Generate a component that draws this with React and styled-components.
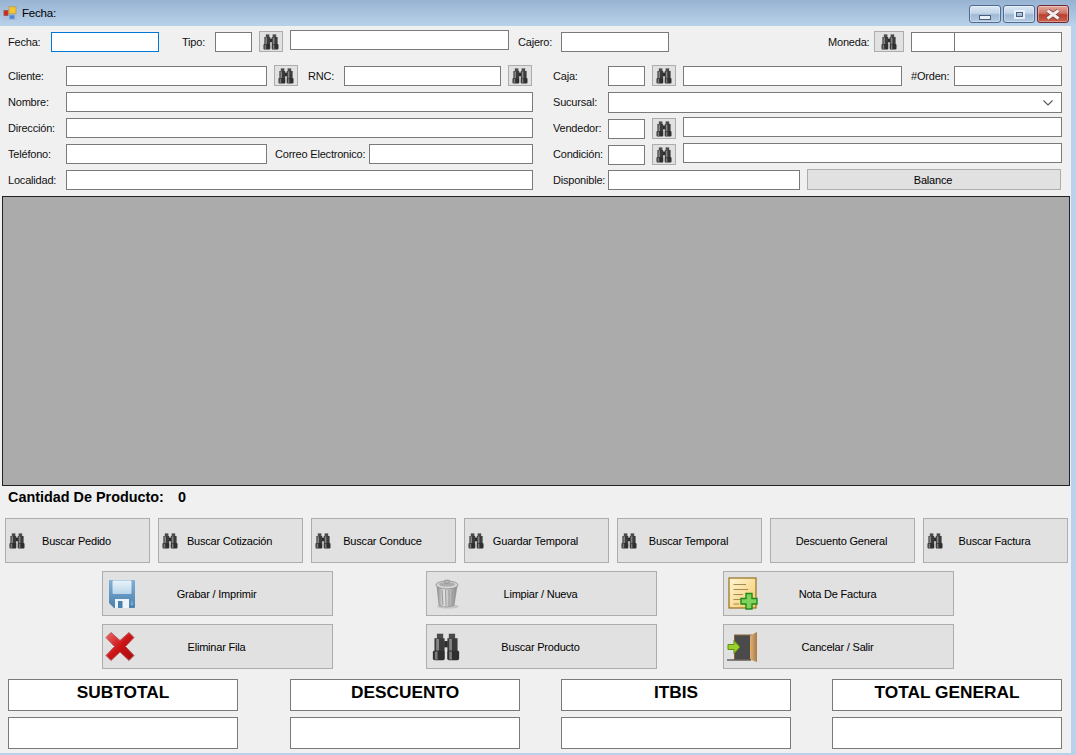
import React from 'react';
import styled, { createGlobalStyle } from 'styled-components';

const GlobalStyle = createGlobalStyle`
  html, body { margin: 0; padding: 0; background: #f0f0f0; }
  * { box-sizing: border-box; }
`;

const BinocularsIcon = ({ size = 16 }) => (
  <svg width={size} height={size} viewBox="0 0 16 16">
    <rect x="2.8" y="0.4" width="3.6" height="3" fill="#4a4a4a" />
    <rect x="9.6" y="0.4" width="3.6" height="3" fill="#4a4a4a" />
    <rect x="1.4" y="3" width="5.8" height="7.6" fill="#3b3b3b" />
    <rect x="8.8" y="3" width="5.8" height="7.6" fill="#3b3b3b" />
    <rect x="2.4" y="3.4" width="1.6" height="7" fill="#858585" />
    <rect x="9.8" y="3.4" width="1.6" height="7" fill="#858585" />
    <rect x="7" y="4.6" width="2" height="3.6" fill="#2c2c2c" />
    <rect x="0.5" y="10" width="6.8" height="5.6" rx="1" fill="#2f2f2f" />
    <rect x="8.7" y="10" width="6.8" height="5.6" rx="1" fill="#2f2f2f" />
    <rect x="1.6" y="10.6" width="1.6" height="4.6" fill="#7a7a7a" />
    <rect x="9.8" y="10.6" width="1.6" height="4.6" fill="#7a7a7a" />
  </svg>
);

const AppIcon = () => (
  <svg width="14" height="14" viewBox="0 0 14 14">
    <rect x="0" y="0" width="14" height="14" fill="#a9bdd4" opacity="0.45" />
    <rect x="1" y="4.5" width="4" height="5" fill="#d9251c" stroke="#8f5a50" strokeWidth="0.8" />
    <rect x="6" y="0.8" width="7" height="7" fill="#f6c531" stroke="#b79a52" strokeWidth="0.8" />
    <rect x="6.5" y="9" width="5" height="4" fill="#4a86d8" stroke="#8fa8c8" strokeWidth="0.8" />
  </svg>
);

const SaveIcon = () => (
  <svg width="28" height="30" viewBox="0 0 28 30">
    <defs>
      <linearGradient id="saveBody" x1="0" y1="0" x2="0" y2="1">
        <stop offset="0" stopColor="#7fb0d6" />
        <stop offset="1" stopColor="#4b81ae" />
      </linearGradient>
      <linearGradient id="saveLabel" x1="0" y1="0" x2="0" y2="1">
        <stop offset="0" stopColor="#eaf3fa" />
        <stop offset="1" stopColor="#b9d5ea" />
      </linearGradient>
    </defs>
    <path d="M1 2 Q1 1 2 1 H26 Q27 1 27 2 V28 Q27 29 26 29 H6 L1 24 Z" fill="url(#saveBody)" />
    <rect x="4.5" y="1.5" width="19" height="13.5" rx="1" fill="url(#saveLabel)" />
    <rect x="7" y="20" width="14" height="9" fill="#eef4f9" />
    <rect x="10" y="22" width="4.5" height="7" fill="#4b81ae" />
    <path d="M24 22 V25.5 M22.8 24.6 L24 26 L25.2 24.6" stroke="#9cc0dc" strokeWidth="0.8" fill="none" />
  </svg>
);

const DeleteIcon = () => (
  <svg width="30" height="31" viewBox="0 0 30 31">
    <defs>
      <linearGradient id="deleteFill" x1="0" y1="0" x2="1" y2="1">
        <stop offset="0" stopColor="#ec6a6a" />
        <stop offset="0.5" stopColor="#cc1416" />
        <stop offset="1" stopColor="#a30d0f" />
      </linearGradient>
    </defs>
    <path
      d="M6 1.5 L15 9.5 L24 1.5 L29 6.5 L20.5 15.5 L29 24.5 L24 29.5 L15 21 L6 29.5 L1 24.5 L9.5 15.5 L1 6.5 Z"
      fill="url(#deleteFill)"
      stroke="#b85a5a"
      strokeWidth="1"
      strokeLinejoin="round"
    />
  </svg>
);

const TrashIcon = () => (
  <svg width="26" height="30" viewBox="0 0 26 30">
    <defs>
      <linearGradient id="trashFill" x1="0" y1="0" x2="1" y2="0">
        <stop offset="0" stopColor="#8e8e8e" />
        <stop offset="0.35" stopColor="#e2e2e2" />
        <stop offset="1" stopColor="#8a8a8a" />
      </linearGradient>
    </defs>
    <ellipse cx="14" cy="27.5" rx="11" ry="2" fill="#c4c4c4" />
    <path d="M3 7 L5 26.5 Q12 29.5 20 26.5 L23 7 Z" fill="url(#trashFill)" stroke="#8a8a8a" strokeWidth="0.6" />
    <path d="M8 11 L9 26 M11.5 11 L12 27 M15 11 L15 27 M18.5 11 L18 26" stroke="#9a9a9a" strokeWidth="1" />
    <ellipse cx="13" cy="6" rx="11" ry="4" fill="#d4d4d4" stroke="#808080" strokeWidth="0.7" />
    <ellipse cx="13" cy="5.4" rx="8" ry="2.2" fill="#adadad" />
    <rect x="10.5" y="1" width="5" height="3.4" rx="1.2" fill="#b4b4b4" stroke="#7a7a7a" strokeWidth="0.5" />
  </svg>
);

const NoteIcon = () => (
  <svg width="30" height="33" viewBox="0 0 30 33">
    <defs>
      <linearGradient id="noteFill" x1="0" y1="0" x2="1" y2="1">
        <stop offset="0" stopColor="#fff6d6" />
        <stop offset="1" stopColor="#f5c964" />
      </linearGradient>
    </defs>
    <rect x="1" y="1" width="27" height="30" fill="url(#noteFill)" stroke="#96701e" strokeWidth="1.2" />
    <path d="M5.5 7.5 H18 M5.5 12.5 H20 M5.5 17.5 H15 M5.5 22.5 H13 M5.5 27 H11" stroke="#a58a55" strokeWidth="1" />
    <path
      d="M18 16.5 H24 V21.5 H29 V27 H24 V32 H18 V27 H13 V21.5 H18 Z"
      fill="#7fd35c"
      stroke="#1f8a1a"
      strokeWidth="1.4"
    />
  </svg>
);

const DoorIcon = () => (
  <svg width="31" height="32" viewBox="0 0 31 32">
    <defs>
      <linearGradient id="doorLeaf" x1="0" y1="0" x2="1" y2="0">
        <stop offset="0" stopColor="#e0b27a" />
        <stop offset="1" stopColor="#a87a48" />
      </linearGradient>
    </defs>
    <rect x="7.5" y="4" width="17" height="24.5" fill="#4a4a4a" stroke="#8a6238" strokeWidth="1" />
    <path d="M23 4.5 L30 1 V31 L23 28.5 Z" fill="url(#doorLeaf)" />
    <rect x="23.6" y="15" width="2" height="4" fill="#e3a63a" />
    <path d="M0 29 H24" stroke="#555" strokeWidth="1.4" />
    <path d="M1 13.5 H7 V9.5 L13 16 L7 22.5 V18.5 H1 Z" fill="#9ad02c" stroke="#5f8f14" strokeWidth="1" />
  </svg>
);

const ChevronIcon = () => (
  <svg width="10" height="6" viewBox="0 0 10 6">
    <path d="M0.5 0.5 L5 5 L9.5 0.5" fill="none" stroke="#555" strokeWidth="1.1" />
  </svg>
);

const CloseGlyph = () => (
  <svg width="16" height="11" viewBox="0 0 16 11">
    <path d="M2.5 1.5 L13.5 9.5 M13.5 1.5 L2.5 9.5" stroke="#6b3a3a" strokeWidth="4.4" />
    <path d="M2.5 1.5 L13.5 9.5 M13.5 1.5 L2.5 9.5" stroke="#f4efee" strokeWidth="3" />
  </svg>
);

export default function App() {
  return (
    <>
      <GlobalStyle />
      <Window>
        <TitleBar>
          <AppIcon />
          <TitleText>Fecha:</TitleText>
          <WindowControls>
            <ControlButton aria-label="Minimizar"><MinimizeGlyph /></ControlButton>
            <ControlButton aria-label="Maximizar"><MaximizeGlyph /></ControlButton>
            <ControlButton $close aria-label="Cerrar"><CloseGlyph /></ControlButton>
          </WindowControls>
        </TitleBar>

        <ClientArea>
          <TopRow>
            <Label $w={43} $top={2}>Fecha:</Label>
            <Field $w={108} $top={2} $focus />
            <Label $w={33} $left={23} $top={2}>Tipo:</Label>
            <Field $w={37} $top={2} />
            <LookupButton $left={7} $top={1}><BinocularsIcon /></LookupButton>
            <Field $w={219} $left={7} />
            <Label $w={43} $left={9} $top={2}>Cajero:</Label>
            <Field $w={108} $top={2} />
            <Label $w={46} $left={159} $top={2}>Moneda:</Label>
            <LookupButton $w={30} $top={1}><BinocularsIcon /></LookupButton>
            <Field $w={44} $left={7} $top={2} />
            <Field $w={108} $left={-1} $top={2} />
          </TopRow>

          <FormColumns>
            <FormColumn>
              <FormRow>
                <Label $w={58} $top={1}>Cliente:</Label>
                <Field $w={201} $top={1} />
                <LookupButton $left={7}><BinocularsIcon /></LookupButton>
                <Label $w={36} $left={10} $top={1}>RNC:</Label>
                <Field $w={157} $top={1} />
                <LookupButton $left={7}><BinocularsIcon /></LookupButton>
              </FormRow>
              <FormRow>
                <Label $w={58} $top={1}>Nombre:</Label>
                <Field $w={467} $top={1} />
              </FormRow>
              <FormRow>
                <Label $w={58} $top={1}>Dirección:</Label>
                <Field $w={467} $top={1} />
              </FormRow>
              <FormRow>
                <Label $w={58} $top={1}>Teléfono:</Label>
                <Field $w={201} $top={1} />
                <Label $w={94} $left={8} $top={1}>Correo Electronico:</Label>
                <Field $w={164} $top={1} />
              </FormRow>
              <FormRow>
                <Label $w={58} $top={1}>Localidad:</Label>
                <Field $w={467} $top={1} />
              </FormRow>
            </FormColumn>

            <FormColumn>
              <FormRow>
                <Label $w={55} $top={1}>Caja:</Label>
                <Field $w={37} $top={1} />
                <LookupButton $left={7}><BinocularsIcon /></LookupButton>
                <Field $w={219} $left={7} $top={1} />
                <Label $w={43} $left={9} $top={1}>#Orden:</Label>
                <Field $w={108} $top={1} />
              </FormRow>
              <FormRow>
                <Label $w={55} $top={1}>Sucursal:</Label>
                <SelectBox><ChevronIcon /></SelectBox>
              </FormRow>
              <FormRow>
                <Label $w={55} $top={1}>Vendedor:</Label>
                <Field $w={37} $top={2} />
                <LookupButton $left={7} $top={1}><BinocularsIcon /></LookupButton>
                <Field $w={379} $left={7} />
              </FormRow>
              <FormRow>
                <Label $w={55} $top={1}>Condición:</Label>
                <Field $w={37} $top={2} />
                <LookupButton $left={7} $top={1}><BinocularsIcon /></LookupButton>
                <Field $w={379} $left={7} />
              </FormRow>
              <FormRow>
                <Label $w={55} $top={1}>Disponible:</Label>
                <Field $w={192} $top={1} />
                <BalanceButton>Balance</BalanceButton>
              </FormRow>
            </FormColumn>
          </FormColumns>

          <DataGrid />

          <CountRow>
            <span>Cantidad De Producto:</span>
            <span>0</span>
          </CountRow>

          <SearchRow>
            <ActionButton><ButtonIcon $left={3}><BinocularsIcon /></ButtonIcon><span>Buscar Pedido</span></ActionButton>
            <ActionButton><ButtonIcon $left={3}><BinocularsIcon /></ButtonIcon><span>Buscar Cotización</span></ActionButton>
            <ActionButton><ButtonIcon $left={3}><BinocularsIcon /></ButtonIcon><span>Buscar Conduce</span></ActionButton>
            <ActionButton><ButtonIcon $left={3}><BinocularsIcon /></ButtonIcon><span>Guardar Temporal</span></ActionButton>
            <ActionButton><ButtonIcon $left={3}><BinocularsIcon /></ButtonIcon><span>Buscar Temporal</span></ActionButton>
            <ActionButton><ButtonIcon /><span>Descuento General</span></ActionButton>
            <ActionButton><ButtonIcon $left={3}><BinocularsIcon /></ButtonIcon><span>Buscar Factura</span></ActionButton>
          </SearchRow>

          <CommandRow>
            <ActionButton><ButtonIcon $left={5}><SaveIcon /></ButtonIcon><span>Grabar / Imprimir</span></ActionButton>
            <ActionButton><ButtonIcon $left={7}><TrashIcon /></ButtonIcon><span>Limpiar / Nueva</span></ActionButton>
            <ActionButton><ButtonIcon $left={4}><NoteIcon /></ButtonIcon><span>Nota De Factura</span></ActionButton>
          </CommandRow>
          <CommandRow>
            <ActionButton><ButtonIcon $left={2}><DeleteIcon /></ButtonIcon><span>Eliminar Fila</span></ActionButton>
            <ActionButton><ButtonIcon $left={5}><BinocularsIcon size={28} /></ButtonIcon><span>Buscar Producto</span></ActionButton>
            <ActionButton><ButtonIcon $left={3}><DoorIcon /></ButtonIcon><span>Cancelar / Salir</span></ActionButton>
          </CommandRow>

          <TotalsGrid>
            <TotalHeading>SUBTOTAL</TotalHeading>
            <TotalHeading>DESCUENTO</TotalHeading>
            <TotalHeading>ITBIS</TotalHeading>
            <TotalHeading>TOTAL GENERAL</TotalHeading>
            <TotalValue />
            <TotalValue />
            <TotalValue />
            <TotalValue />
          </TotalsGrid>
        </ClientArea>
      </Window>
    </>
  );
}

const Window = styled.div`
  width: 1076px;
  height: 755px;
  overflow: hidden;
  display: flex;
  flex-direction: column;
  background: #f0f0f0;
  color: #000;
  font-family: "Liberation Sans", Arial, sans-serif;
  font-size: 11px;
  letter-spacing: -0.2px;
`;

const TitleBar = styled.div`
  height: 26px;
  flex: none;
  display: flex;
  align-items: center;
  padding: 0 7px 0 3px;
  background: linear-gradient(#97b3d2, #b9d1ea);
`;

const TitleText = styled.span`
  margin-left: 5px;
  font-size: 11.5px;
`;

const WindowControls = styled.div`
  margin-left: auto;
  margin-top: 2px;
  display: flex;
  gap: 2px;
`;

const ControlButton = styled.div`
  width: 32px;
  height: 18px;
  display: flex;
  align-items: center;
  justify-content: center;
  border: 1px solid ${p => (p.$close ? '#6e2a33' : '#4f6a8e')};
  border-radius: 3px;
  background: ${p =>
    p.$close
      ? 'linear-gradient(#e5a79c 0%, #cf7465 45%, #b8402f 55%, #c9604e 100%)'
      : 'linear-gradient(#dbe7f4 0%, #c2d4e8 45%, #9fb8d4 55%, #b5cbe2 100%)'};
  box-shadow: inset 0 0 0 1px rgba(255, 255, 255, 0.35);
`;

const MinimizeGlyph = styled.span`
  display: block;
  width: 12px;
  height: 5px;
  margin-top: 6px;
  background: #e9eff6;
  border: 1px solid #47607f;
`;

const MaximizeGlyph = styled.span`
  display: block;
  width: 11px;
  height: 9px;
  border: 2px solid #e9eff6;
  outline: 1px solid #47607f;
  outline-offset: -3px;
`;

const ClientArea = styled.div`
  flex: 1;
  display: flex;
  flex-direction: column;
  border-right: 5px solid #b9d1ea;
  border-bottom: 2px solid #b9d1ea;
`;

const TopRow = styled.div`
  height: 39px;
  flex: none;
  display: flex;
  align-items: flex-start;
  padding: 4px 0 0 8px;
`;

const FormColumns = styled.div`
  display: grid;
  grid-template-columns: 545px 509px;
  padding-left: 8px;
  flex: none;
`;

const FormColumn = styled.div`
  display: flex;
  flex-direction: column;
`;

const FormRow = styled.div`
  height: 26px;
  display: flex;
  align-items: flex-start;
`;

const Label = styled.label`
  flex: none;
  width: ${p => p.$w}px;
  height: 20px;
  line-height: 20px;
  margin-left: ${p => p.$left || 0}px;
  margin-top: ${p => p.$top || 0}px;
  white-space: nowrap;
  color: #111;
`;

const Field = styled.input.attrs({ readOnly: true })`
  flex: none;
  width: ${p => p.$w}px;
  height: 20px;
  margin: ${p => p.$top || 0}px 0 0 ${p => p.$left || 0}px;
  padding: 0;
  background: #fff;
  border: 1px solid ${p => (p.$focus ? '#0078d7' : '#7a7a7a')};
  border-radius: 0;
  outline: none;
`;

const SelectBox = styled.div`
  width: 454px;
  height: 21px;
  margin-top: 1px;
  padding-right: 8px;
  display: flex;
  align-items: center;
  justify-content: flex-end;
  background: #fff;
  border: 1px solid #7a7a7a;
`;

const LookupButton = styled.div`
  flex: none;
  width: ${p => p.$w || 24}px;
  height: 21px;
  margin: ${p => p.$top || 0}px 0 0 ${p => p.$left || 0}px;
  display: flex;
  align-items: center;
  justify-content: center;
  background: #e1e1e1;
  border: 1px solid #adadad;
`;

const BalanceButton = styled.div`
  width: 254px;
  height: 21px;
  margin-left: 7px;
  padding-right: 2px;
  display: flex;
  align-items: center;
  justify-content: center;
  background: #e1e1e1;
  border: 1px solid #adadad;
`;

const DataGrid = styled.div`
  flex: none;
  width: 1068px;
  height: 290px;
  margin: 1px 0 0 2px;
  background: #ababab;
  border: 1px solid #222;
`;

const CountRow = styled.div`
  flex: none;
  height: 22px;
  margin-left: 8px;
  display: flex;
  align-items: center;
  gap: 14px;
  font-size: 14.4px;
  font-weight: bold;
  letter-spacing: 0;
`;

const SearchRow = styled.div`
  flex: none;
  margin-top: 10px;
  padding-left: 5px;
  display: grid;
  grid-template-columns: repeat(7, 145px);
  column-gap: 8px;
`;

const CommandRow = styled.div`
  flex: none;
  margin-top: 8px;
  padding-left: 102px;
  display: grid;
  grid-template-columns: 324px 297px 231px;
  & > * { width: 231px; }
`;

const ActionButton = styled.div`
  height: 45px;
  padding-right: 2px;
  display: grid;
  grid-template-columns: 1fr auto 1fr;
  align-items: center;
  white-space: nowrap;
  background: #e1e1e1;
  border: 1px solid #adadad;
`;

const ButtonIcon = styled.div`
  display: flex;
  align-items: center;
  padding-left: ${p => p.$left || 0}px;
  min-width: 0;
`;

const TotalsGrid = styled.div`
  flex: none;
  margin-top: 10px;
  padding-left: 8px;
  display: grid;
  grid-template-columns: 282px 271px 271px 230px;
  row-gap: 6px;
`;

const TotalHeading = styled.div`
  width: 230px;
  height: 32px;
  padding-top: 2px;
  text-align: center;
  background: #fff;
  border: 1px solid #7a7a7a;
  font-size: 17.3px;
  font-weight: bold;
  line-height: 20px;
  letter-spacing: 0;
`;

const TotalValue = styled.div`
  width: 230px;
  height: 32px;
  background: #fff;
  border: 1px solid #7a7a7a;
`;
